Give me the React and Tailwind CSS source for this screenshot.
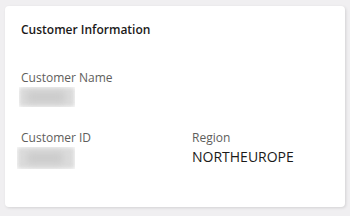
export default function App() {
  const blur = (
    <div className="relative h-[20px] w-[56px] overflow-hidden">
      <div className="absolute inset-0 bg-[#dcdcdc] blur-[2px]" />
      <div className="absolute left-[8px] right-[10px] top-[5px] bottom-[5px] bg-[#c8c8c8] blur-[4px]" />
    </div>
  );
  return (
    <div className="w-[350px] h-[216px] bg-[#f0eff1] p-[5px] pt-[6px] pb-[9px]" style={{ fontFamily: '"Open Sans", "Noto Sans", sans-serif' }}>
      <div className="h-full w-full rounded-[4px] bg-white shadow-[1px_1px_3px_rgba(0,0,0,0.12)] px-4 pt-4">
        <div className="text-[12px] leading-[16px] font-semibold text-[#1b1a19]">Customer Information</div>
        <div className="mt-8 flex flex-col">
          <div className="text-[12px] leading-[16px] text-[#605e5c]">Customer Name</div>
          <div className="mt-[1px] -ml-[2px]">{blur}</div>
        </div>
        <div className="mt-[23px] grid grid-cols-[171px_1fr]">
          <div className="flex flex-col">
            <div className="text-[12px] leading-[16px] text-[#605e5c]">Customer ID</div>
            <div className="mt-[1px] -ml-[4px]">
              <div className="relative h-[22px] w-[58px] overflow-hidden">
                <div className="absolute inset-0 bg-[#dcdcdc] blur-[2px]" />
                <div className="absolute left-[10px] right-[12px] top-[6px] bottom-[6px] bg-[#c8c8c8] blur-[4px]" />
              </div>
            </div>
          </div>
          <div className="flex flex-col">
            <div className="text-[12px] leading-[16px] text-[#605e5c]">Region</div>
            <div className="mt-[1px] text-[14px] leading-[20px] text-[#1b1a19]">NORTHEUROPE</div>
          </div>
        </div>
      </div>
    </div>
  );
}
